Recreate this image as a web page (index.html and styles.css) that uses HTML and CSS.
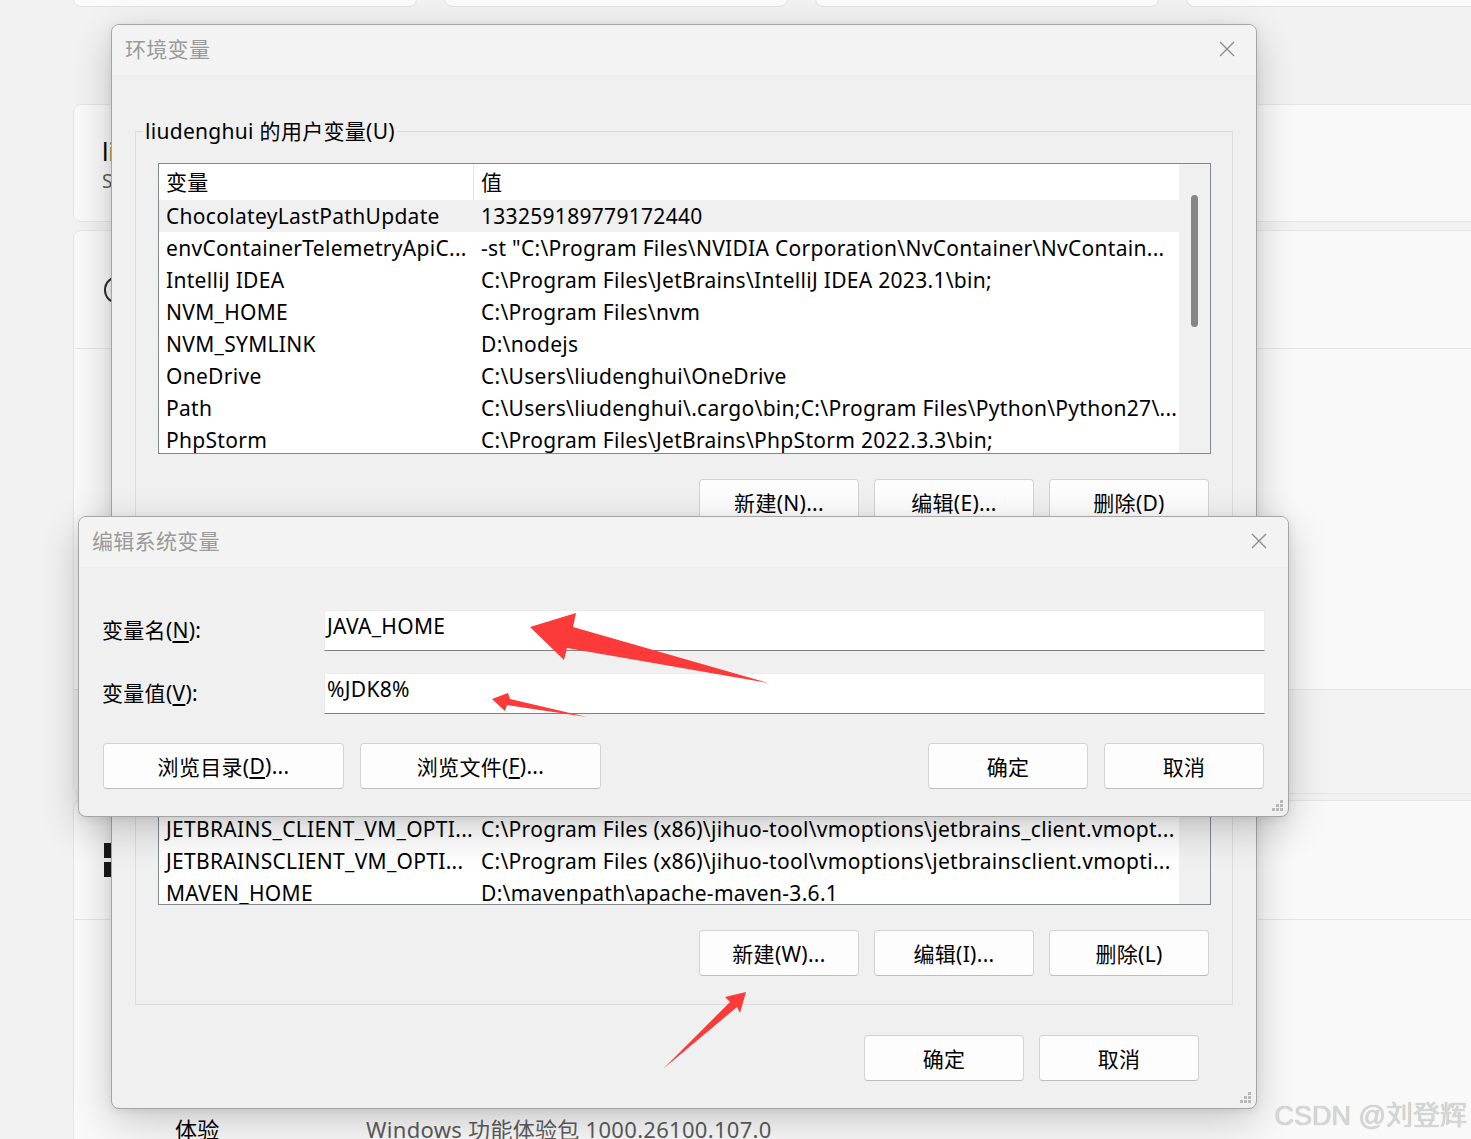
FILE: index.html
```html
<!DOCTYPE html>
<html lang="zh-CN">

<head>
  <meta charset="UTF-8">
  <meta name="viewport" content="width=device-width, initial-scale=1.0">
  <title>环境变量</title>
  <link rel="stylesheet" href="styles.css">
</head>

<body>
  <!-- 背景：系统设置 关于 页面 -->
  <div class="settings">
    <div class="top-cards">
      <div class="tcard"></div>
      <div class="tcard"></div>
      <div class="tcard"></div>
      <div class="tcard"></div>
    </div>
    <div class="card account">
      <div class="acc-name">liudenghui</div>
      <div class="acc-sub">System Product Name</div>
    </div>
    <div class="card specs">
      <div class="sec sec-a"><span class="ring"></span></div>
      <div class="sec sec-b"></div>
      <div class="sec sec-c"></div>
    </div>
    <div class="card winspec">
      <div class="sec sec-d">
        <span class="winlogo"><i></i><i></i><i></i><i></i></span>
      </div>
      <div class="sec sec-e">
        <div class="spec-row"><span class="k">版本</span><span class="v">Windows 11 家庭中文版</span></div>
        <div class="spec-row"><span class="k">版本号</span><span class="v">24H2</span></div>
        <div class="spec-row"><span class="k">安装日期</span><span class="v">2024/10/12</span></div>
        <div class="spec-row"><span class="k">操作系统版本</span><span class="v">26100.2314</span></div>
        <div class="spec-row"><span class="k">体验</span><span class="v">Windows 功能体验包 1000.26100.107.0</span></div>
      </div>
    </div>
  </div>

  <!-- 环境变量 窗口 -->
  <div class="dialog env">
    <div class="titlebar">
      <span class="title">环境变量</span>
      <svg class="close" width="16" height="16" viewBox="0 0 16 16"><path d="M1 1L15 15M15 1L1 15" /></svg>
    </div>
    <div class="env-body">
      <fieldset class="group">
        <legend>liudenghui 的用户变量(U)</legend>
        <div class="listview">
          <div class="lv-main">
            <div class="lv-head"><span class="c1">变量</span><span class="c2">值</span></div>
            <div class="lv-row sel"><span class="c1">ChocolateyLastPathUpdate</span><span class="c2">133259189779172440</span></div>
            <div class="lv-row"><span class="c1">envContainerTelemetryApiC...</span><span class="c2">-st "C:\Program Files\NVIDIA Corporation\NvContainer\NvContain...</span></div>
            <div class="lv-row"><span class="c1">IntelliJ IDEA</span><span class="c2">C:\Program Files\JetBrains\IntelliJ IDEA 2023.1\bin;</span></div>
            <div class="lv-row"><span class="c1">NVM_HOME</span><span class="c2">C:\Program Files\nvm</span></div>
            <div class="lv-row"><span class="c1">NVM_SYMLINK</span><span class="c2">D:\nodejs</span></div>
            <div class="lv-row"><span class="c1">OneDrive</span><span class="c2">C:\Users\liudenghui\OneDrive</span></div>
            <div class="lv-row"><span class="c1">Path</span><span class="c2">C:\Users\liudenghui\.cargo\bin;C:\Program Files\Python\Python27\...</span></div>
            <div class="lv-row"><span class="c1">PhpStorm</span><span class="c2">C:\Program Files\JetBrains\PhpStorm 2022.3.3\bin;</span></div>
          </div>
          <div class="lv-scroll"><span class="thumb"></span></div>
        </div>
        <div class="btn-row">
          <button class="btn">新建(N)...</button>
          <button class="btn">编辑(E)...</button>
          <button class="btn">删除(D)</button>
        </div>
      </fieldset>

      <fieldset class="group sys">
        <legend>系统变量(S)</legend>
        <div class="listview">
          <div class="lv-main">
            <div class="lv-head"><span class="c1">变量</span><span class="c2">值</span></div>
            <div class="lv-row"><span class="c1">ComSpec</span><span class="c2">C:\Windows\system32\cmd.exe</span></div>
            <div class="lv-row"><span class="c1">DriverData</span><span class="c2">C:\Windows\System32\Drivers\DriverData</span></div>
            <div class="lv-row"><span class="c1">GATEWAY_VM_OPTIONS</span><span class="c2">C:\Program Files (x86)\jihuo-tool\vmoptions\gateway.vmoptions</span></div>
            <div class="lv-row"><span class="c1">IDEA_VM_OPTIONS</span><span class="c2">C:\Program Files (x86)\jihuo-tool\vmoptions\idea.vmoptions</span></div>
            <div class="lv-row"><span class="c1">JDK8</span><span class="c2">C:\Program Files\Java\jdk1.8.0_202</span></div>
            <div class="lv-row"><span class="c1">JETBRAINS_CLIENT_VM_OPTI...</span><span class="c2">C:\Program Files (x86)\jihuo-tool\vmoptions\jetbrains_client.vmopt...</span></div>
            <div class="lv-row"><span class="c1">JETBRAINSCLIENT_VM_OPTI...</span><span class="c2">C:\Program Files (x86)\jihuo-tool\vmoptions\jetbrainsclient.vmopti...</span></div>
            <div class="lv-row"><span class="c1">MAVEN_HOME</span><span class="c2">D:\mavenpath\apache-maven-3.6.1</span></div>
          </div>
          <div class="lv-scroll"><span class="thumb small"></span></div>
        </div>
        <div class="btn-row">
          <button class="btn">新建(W)...</button>
          <button class="btn">编辑(I)...</button>
          <button class="btn">删除(L)</button>
        </div>
      </fieldset>

      <div class="env-foot">
        <button class="btn">确定</button>
        <button class="btn">取消</button>
      </div>
    </div>
    <svg class="grip" width="12" height="12" viewBox="0 0 12 12">
      <rect x="8" y="0" width="3" height="3" /><rect x="4" y="4" width="3" height="3" /><rect x="8" y="4" width="3" height="3" />
      <rect x="0" y="8" width="3" height="3" /><rect x="4" y="8" width="3" height="3" /><rect x="8" y="8" width="3" height="3" />
    </svg>
  </div>

  <!-- 编辑系统变量 窗口 -->
  <div class="dialog edit">
    <div class="titlebar">
      <span class="title">编辑系统变量</span>
      <svg class="close" width="16" height="16" viewBox="0 0 16 16"><path d="M1 1L15 15M15 1L1 15" /></svg>
    </div>
    <div class="edit-body">
      <div class="field">
        <label>变量名(<u>N</u>):</label>
        <div class="input">JAVA_HOME</div>
      </div>
      <div class="field">
        <label>变量值(<u>V</u>):</label>
        <div class="input">%JDK8%</div>
      </div>
      <div class="edit-btns">
        <div class="btn-group">
          <button class="btn wide">浏览目录(<u>D</u>)...</button>
          <button class="btn wide">浏览文件(<u>F</u>)...</button>
        </div>
        <div class="btn-group">
          <button class="btn">确定</button>
          <button class="btn">取消</button>
        </div>
      </div>
    </div>
    <svg class="grip" width="12" height="12" viewBox="0 0 12 12">
      <rect x="8" y="0" width="3" height="3" /><rect x="4" y="4" width="3" height="3" /><rect x="8" y="4" width="3" height="3" />
      <rect x="0" y="8" width="3" height="3" /><rect x="4" y="8" width="3" height="3" /><rect x="8" y="8" width="3" height="3" />
    </svg>
  </div>

  <!-- 标注箭头 -->
  <svg class="marks" width="1471" height="1139" viewBox="0 0 1471 1139">
    <polygon points="530,627 576,613 573,627 768,683 567,648 564,660" />
    <polygon points="492,699 508,693 510,699 587,717 507,705 505,711" />
    <polygon points="746,992 725,997 730,1002 663,1069 737,1007 740,1013" />
  </svg>

  <div class="watermark">CSDN @刘登辉</div>
</body>

</html>
```

FILE: styles.css
```css
* {
  margin: 0;
  padding: 0;
  box-sizing: border-box;
}

body {
  width: 1471px;
  height: 1139px;
  overflow: hidden;
  position: relative;
  background: #f2f2f2;
  color: #000;
  font-family: "Noto Sans", "Noto Sans CJK SC", sans-serif;
  font-size: 21px;
  letter-spacing: 0.3px;
}

u {
  text-underline-offset: 3px;
}

/* 背景设置页 */
.settings {
  width: 1560px;
  padding-left: 73px;
}

.top-cards {
  display: flex;
  gap: 27px;
  height: 27px;
  margin-top: -20px;
}

.tcard {
  width: 344px;
  height: 27px;
  background: #fbfbfb;
  border: 1px solid #e3e3e3;
  border-radius: 0 0 8px 8px;
}

.card {
  width: 1440px;
  background: #f9f9f9;
  border: 1px solid #e5e5e5;
  border-radius: 8px;
}

.account {
  margin-top: 97px;
  height: 118px;
  padding: 29px 0 0 28px;
}

.acc-name {
  font-size: 25px;
  line-height: 34px;
  letter-spacing: 0;
}

.acc-sub {
  font-size: 19px;
  line-height: 26px;
  color: #5d5d5d;
}

.specs {
  margin-top: 8px;
}

.sec {
  display: flex;
  align-items: center;
  padding-left: 30px;
  border-bottom: 1px solid #e5e5e5;
}

.sec-a {
  height: 118px;
}

.sec-b {
  height: 341px;
}

.sec-c {
  height: 103px;
  background: #f3f3f3;
  border-bottom: none;
  border-radius: 0 0 8px 8px;
}

.ring {
  width: 28px;
  height: 28px;
  border: 2px solid #2b2b2b;
  border-radius: 50%;
}

.winspec {
  margin-top: 6px;
  height: 400px;
}

.sec-d {
  height: 119px;
}

.winlogo {
  display: grid;
  grid-template-columns: 15px 15px;
  gap: 4px;
}

.winlogo i {
  width: 15px;
  height: 15px;
  background: #1a1a1a;
}

.sec-e {
  display: block;
  border-bottom: none;
  padding: 19px 0 0 101px;
}

.spec-row {
  display: flex;
  height: 42px;
  align-items: center;
  font-size: 22px;
}

.spec-row .k {
  width: 191px;
}

.spec-row .v {
  color: #5c5c5c;
}

/* 窗口 */
.dialog {
  position: absolute;
  display: flex;
  flex-direction: column;
  background: #f0f0f0;
  border: 1px solid #a5a5a5;
  border-radius: 8px;
  overflow: hidden;
  box-shadow: 0 12px 40px rgba(0, 0, 0, 0.2), 0 2px 8px rgba(0, 0, 0, 0.08);
}

.titlebar {
  height: 50px;
  flex: none;
  display: flex;
  align-items: center;
  justify-content: space-between;
  padding: 0 21px 5px 13px;
  background: #f3f3f3;
}

.title {
  color: #9a9a9a;
  font-size: 21px;
}

.close {
  margin-top: 3px;
}

.close path {
  stroke: #8c8c8c;
  stroke-width: 1.3;
  fill: none;
}

.grip {
  position: absolute;
  right: 4px;
  bottom: 4px;
}

.grip rect {
  fill: #b8b8b8;
}

.env {
  left: 111px;
  top: 24px;
  width: 1146px;
  height: 1085px;
}

.env-body {
  padding: 42px 23px 0 23px;
}

.group {
  border: 1px solid #dcdcdc;
  padding: 18px 21px 28px 22px;
  min-width: 0;
}

.group legend {
  font-size: 21px;
  line-height: 28px;
  padding: 0 2px;
  margin-left: -15px;
}

.group.sys {
  margin-top: 14px;
}

.listview {
  display: flex;
  height: 291px;
  background: #fff;
  border: 1px solid #828790;
}

.lv-main {
  flex: 1;
  overflow: hidden;
}

.sys .lv-main {
  padding-top: 2px;
}

.lv-head,
.lv-row {
  display: flex;
  white-space: nowrap;
}

.lv-head {
  height: 36px;
  line-height: 36px;
}

.lv-row {
  height: 32px;
  line-height: 32px;
}

.lv-row.sel {
  background: #f0f0f0;
}

.c1 {
  width: 315px;
  flex: none;
  padding-left: 7px;
  overflow: hidden;
}

.lv-head .c1 {
  border-right: 1px solid #e5e5e5;
}

.c2 {
  padding-left: 7px;
  overflow: hidden;
}

.lv-scroll {
  width: 31px;
  flex: none;
  background: #f0f0f0;
  padding: 31px 0 0 12px;
}

.thumb {
  display: block;
  width: 7px;
  height: 132px;
  border-radius: 4px;
  background: #868686;
}

.thumb.small {
  height: 60px;
}

.btn-row {
  display: flex;
  justify-content: flex-end;
  gap: 15px;
  margin-top: 25px;
  padding-right: 2px;
}

.btn {
  width: 160px;
  height: 46px;
  display: flex;
  align-items: center;
  justify-content: center;
  background: #fdfdfd;
  border: 1px solid #d3d3d3;
  border-bottom-color: #bdbdbd;
  border-radius: 4px;
  color: #000;
  font-family: inherit;
  font-size: 21px;
  letter-spacing: inherit;
}

.btn.wide {
  width: 241px;
}

.env-foot {
  display: flex;
  justify-content: flex-end;
  gap: 15px;
  margin-top: 30px;
  padding-right: 34px;
}

.edit {
  left: 78px;
  top: 516px;
  width: 1211px;
  height: 301px;
}

.edit-body {
  padding: 43px 23px 0 23px;
}

.field {
  display: flex;
  align-items: center;
  height: 41px;
}

.field + .field {
  margin-top: 22px;
}

.field label {
  width: 222px;
  flex: none;
  padding-bottom: 3px;
}

.input {
  flex: 1;
  height: 41px;
  align-self: stretch;
  padding: 0 0 0 2px;
  line-height: 30px;
  background: #fff;
  border: 1px solid #ececec;
  border-bottom: 1px solid #7f7f7f;
}

.edit-btns {
  display: flex;
  justify-content: space-between;
  margin-top: 29px;
  padding: 0 1px;
}

.btn-group {
  display: flex;
  gap: 16px;
}

/* 标注 */
.marks {
  position: absolute;
  left: 0;
  top: 0;
  pointer-events: none;
}

.marks polygon {
  fill: #fd3a3a;
}

.watermark {
  position: absolute;
  right: 4px;
  top: 1094px;
  font-family: "Liberation Sans", "Noto Sans CJK SC", sans-serif;
  font-size: 27px;
  letter-spacing: 0;
  color: #d6d6d6;
  text-shadow: 0 0 1px rgba(0, 0, 0, 0.3);
}
```
